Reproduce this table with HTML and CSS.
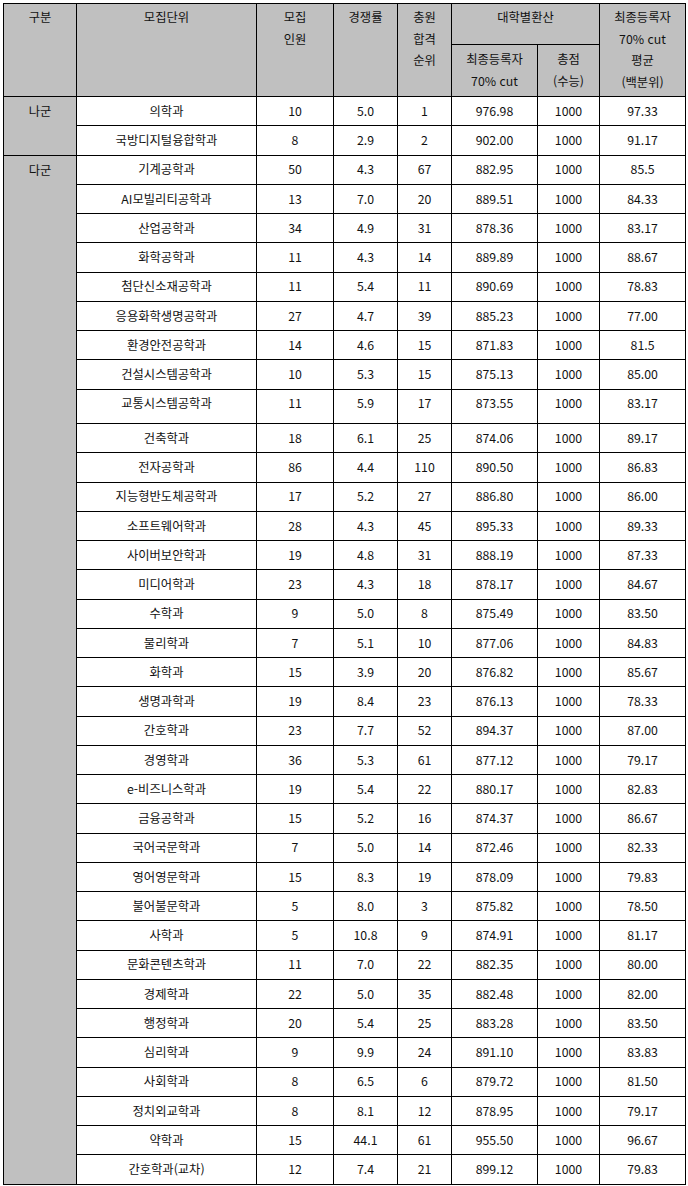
FILE: index.html
```html
<!DOCTYPE html>
<html lang="ko">
<head>
<meta charset="utf-8">
<title>모집단위별 결과</title>
<link rel="stylesheet" href="styles.css">
</head>
<body>
<table class="tbl">
  <colgroup>
    <col class="c1"><col class="c2"><col class="c3"><col class="c4">
    <col class="c5"><col class="c6"><col class="c7"><col class="c8">
  </colgroup>
  <thead>
    <tr class="h1">
      <th rowspan="2">구분</th>
      <th rowspan="2">모집단위</th>
      <th rowspan="2">모집<br>인원</th>
      <th rowspan="2">경쟁률</th>
      <th rowspan="2">충원<br>합격<br>순위</th>
      <th colspan="2">대학별환산</th>
      <th rowspan="2">최종등록자<br>70% cut<br>평균<br>(백분위)</th>
    </tr>
    <tr class="h2">
      <th class="sub">최종등록자<br>70% cut</th>
      <th class="sub">총점<br>(수능)</th>
    </tr>
  </thead>
  <tbody>
    <tr><td class="grp" rowspan="2">나군</td><td>의학과</td><td>10</td><td>5.0</td><td>1</td><td>976.98</td><td>1000</td><td>97.33</td></tr>
    <tr><td>국방디지털융합학과</td><td>8</td><td>2.9</td><td>2</td><td>902.00</td><td>1000</td><td>91.17</td></tr>
    <tr><td class="grp" rowspan="35">다군</td><td>기계공학과</td><td>50</td><td>4.3</td><td>67</td><td>882.95</td><td>1000</td><td>85.5</td></tr>
    <tr><td>AI모빌리티공학과</td><td>13</td><td>7.0</td><td>20</td><td>889.51</td><td>1000</td><td>84.33</td></tr>
    <tr><td>산업공학과</td><td>34</td><td>4.9</td><td>31</td><td>878.36</td><td>1000</td><td>83.17</td></tr>
    <tr><td>화학공학과</td><td>11</td><td>4.3</td><td>14</td><td>889.89</td><td>1000</td><td>88.67</td></tr>
    <tr><td>첨단신소재공학과</td><td>11</td><td>5.4</td><td>11</td><td>890.69</td><td>1000</td><td>78.83</td></tr>
    <tr><td>응용화학생명공학과</td><td>27</td><td>4.7</td><td>39</td><td>885.23</td><td>1000</td><td>77.00</td></tr>
    <tr><td>환경안전공학과</td><td>14</td><td>4.6</td><td>15</td><td>871.83</td><td>1000</td><td>81.5</td></tr>
    <tr><td>건설시스템공학과</td><td>10</td><td>5.3</td><td>15</td><td>875.13</td><td>1000</td><td>85.00</td></tr>
    <tr class="tall"><td>교통시스템공학과</td><td>11</td><td>5.9</td><td>17</td><td>873.55</td><td>1000</td><td>83.17</td></tr>
    <tr><td>건축학과</td><td>18</td><td>6.1</td><td>25</td><td>874.06</td><td>1000</td><td>89.17</td></tr>
    <tr><td>전자공학과</td><td>86</td><td>4.4</td><td>110</td><td>890.50</td><td>1000</td><td>86.83</td></tr>
    <tr><td>지능형반도체공학과</td><td>17</td><td>5.2</td><td>27</td><td>886.80</td><td>1000</td><td>86.00</td></tr>
    <tr><td>소프트웨어학과</td><td>28</td><td>4.3</td><td>45</td><td>895.33</td><td>1000</td><td>89.33</td></tr>
    <tr><td>사이버보안학과</td><td>19</td><td>4.8</td><td>31</td><td>888.19</td><td>1000</td><td>87.33</td></tr>
    <tr><td>미디어학과</td><td>23</td><td>4.3</td><td>18</td><td>878.17</td><td>1000</td><td>84.67</td></tr>
    <tr><td>수학과</td><td>9</td><td>5.0</td><td>8</td><td>875.49</td><td>1000</td><td>83.50</td></tr>
    <tr><td>물리학과</td><td>7</td><td>5.1</td><td>10</td><td>877.06</td><td>1000</td><td>84.83</td></tr>
    <tr><td>화학과</td><td>15</td><td>3.9</td><td>20</td><td>876.82</td><td>1000</td><td>85.67</td></tr>
    <tr><td>생명과학과</td><td>19</td><td>8.4</td><td>23</td><td>876.13</td><td>1000</td><td>78.33</td></tr>
    <tr><td>간호학과</td><td>23</td><td>7.7</td><td>52</td><td>894.37</td><td>1000</td><td>87.00</td></tr>
    <tr><td>경영학과</td><td>36</td><td>5.3</td><td>61</td><td>877.12</td><td>1000</td><td>79.17</td></tr>
    <tr><td>e-비즈니스학과</td><td>19</td><td>5.4</td><td>22</td><td>880.17</td><td>1000</td><td>82.83</td></tr>
    <tr><td>금융공학과</td><td>15</td><td>5.2</td><td>16</td><td>874.37</td><td>1000</td><td>86.67</td></tr>
    <tr><td>국어국문학과</td><td>7</td><td>5.0</td><td>14</td><td>872.46</td><td>1000</td><td>82.33</td></tr>
    <tr><td>영어영문학과</td><td>15</td><td>8.3</td><td>19</td><td>878.09</td><td>1000</td><td>79.83</td></tr>
    <tr><td>불어불문학과</td><td>5</td><td>8.0</td><td>3</td><td>875.82</td><td>1000</td><td>78.50</td></tr>
    <tr><td>사학과</td><td>5</td><td>10.8</td><td>9</td><td>874.91</td><td>1000</td><td>81.17</td></tr>
    <tr><td>문화콘텐츠학과</td><td>11</td><td>7.0</td><td>22</td><td>882.35</td><td>1000</td><td>80.00</td></tr>
    <tr><td>경제학과</td><td>22</td><td>5.0</td><td>35</td><td>882.48</td><td>1000</td><td>82.00</td></tr>
    <tr><td>행정학과</td><td>20</td><td>5.4</td><td>25</td><td>883.28</td><td>1000</td><td>83.50</td></tr>
    <tr><td>심리학과</td><td>9</td><td>9.9</td><td>24</td><td>891.10</td><td>1000</td><td>83.83</td></tr>
    <tr><td>사회학과</td><td>8</td><td>6.5</td><td>6</td><td>879.72</td><td>1000</td><td>81.50</td></tr>
    <tr><td>정치외교학과</td><td>8</td><td>8.1</td><td>12</td><td>878.95</td><td>1000</td><td>79.17</td></tr>
    <tr><td>약학과</td><td>15</td><td>44.1</td><td>61</td><td>955.50</td><td>1000</td><td>96.67</td></tr>
    <tr><td>간호학과(교차)</td><td>12</td><td>7.4</td><td>21</td><td>899.12</td><td>1000</td><td>79.83</td></tr>
  </tbody>
</table>
</body>
</html>
```

FILE: styles.css
```css
html, body {
  margin: 0;
  padding: 0;
  background: #ffffff;
}

body {
  font-family: "Noto Sans CJK KR", "Noto Sans", sans-serif;
  font-size: 12.3px;
  color: #111111;
}

.tbl {
  border-collapse: collapse;
  table-layout: fixed;
  width: 682px;
  margin: 3px 0 0 3px;
}

.c1 { width: 73px; }
.c2 { width: 180px; }
.c3 { width: 77px; }
.c4 { width: 64px; }
.c5 { width: 54px; }
.c6 { width: 86px; }
.c7 { width: 62px; }
.c8 { width: 86px; }

.tbl th,
.tbl td {
  border: 1px solid #000000;
  padding: 0 2px;
  text-align: center;
  font-weight: normal;
  line-height: 21.5px;
  white-space: nowrap;
}

.tbl th {
  background: #c0c0c0;
  vertical-align: top;
  padding-top: 3px;
}

.tbl th.sub {
  padding-top: 4px;
}

.h1 { height: 41px; }
.h2 { height: 52px; }

.tbl tbody tr { height: 29.25px; }
.tbl tbody tr.tall { height: 34.6px; }

.tbl td {
  background: #ffffff;
  vertical-align: middle;
  padding-top: 1px;
  padding-bottom: 0;
}

.tbl tr.tall td {
  padding-bottom: 6px;
}

.tbl td.grp {
  background: #c0c0c0;
  vertical-align: top;
  padding-top: 4px;
  padding-bottom: 0;
}
```
